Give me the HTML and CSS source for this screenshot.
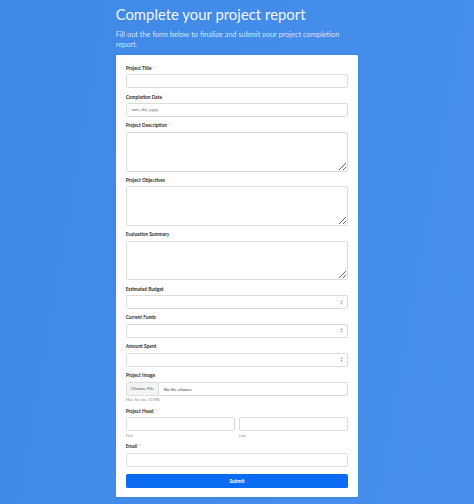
FILE: index.html
```html
<!DOCTYPE html>
<html lang="en">
<head>
<meta charset="utf-8">
<title>Complete your project report</title>
<link rel="stylesheet" href="styles.css">
</head>
<body>
<div class="page">
  <main class="wrap">
    <h1 class="title">Complete your project report</h1>
    <p class="subtitle">Fill out the form below to finalize and submit your project completion report.</p>
    <form class="card">
      <div class="field">
        <label class="label">Project Title <span class="req">*</span></label>
        <input class="input" type="text">
      </div>
      <div class="field">
        <label class="label">Completion Date <span class="req">*</span></label>
        <input class="input date" type="date">
      </div>
      <div class="field">
        <label class="label">Project Description <span class="req">*</span></label>
        <textarea class="input area"></textarea>
      </div>
      <div class="field">
        <label class="label">Project Objectives</label>
        <textarea class="input area"></textarea>
      </div>
      <div class="field">
        <label class="label">Evaluation Summary</label>
        <textarea class="input area"></textarea>
      </div>
      <div class="field">
        <label class="label">Estimated Budget</label>
        <div class="numwrap">
          <input class="input num" type="number">
          <svg class="spin" viewBox="0 0 8 14" width="8" height="14"><path d="M4 1 L7 5 H1 Z M4 13 L7 9 H1 Z" fill="#8a8a8a"/></svg>
        </div>
      </div>
      <div class="field">
        <label class="label">Current Funds</label>
        <div class="numwrap">
          <input class="input num" type="number">
          <svg class="spin" viewBox="0 0 8 14" width="8" height="14"><path d="M4 1 L7 5 H1 Z M4 13 L7 9 H1 Z" fill="#8a8a8a"/></svg>
        </div>
      </div>
      <div class="field">
        <label class="label">Amount Spent</label>
        <div class="numwrap">
          <input class="input num" type="number">
          <svg class="spin" viewBox="0 0 8 14" width="8" height="14"><path d="M4 1 L7 5 H1 Z M4 13 L7 9 H1 Z" fill="#8a8a8a"/></svg>
        </div>
      </div>
      <div class="field">
        <label class="label">Project Image</label>
        <input class="input file" type="file">
        <div class="help">Max. file size: 10 MB.</div>
      </div>
      <div class="field">
        <label class="label">Project Head <span class="req">*</span></label>
        <div class="pair">
          <div class="sub">
            <input class="input" type="text">
            <div class="help">First</div>
          </div>
          <div class="sub">
            <input class="input" type="text">
            <div class="help">Last</div>
          </div>
        </div>
      </div>
      <div class="field">
        <label class="label">Email <span class="req">*</span></label>
        <input class="input" type="email">
      </div>
      <button class="submit" type="button">Submit</button>
    </form>
  </main>
</div>
</body>
</html>
```
FILE: styles.css
```css
html, body {
  margin: 0;
  padding: 0;
}
body {
  background: linear-gradient(100deg, #3f88e6 0%, #438cea 45%, #478fea 100%);
  font-family: Lato, "Open Sans", sans-serif;
  min-height: 504px;
  overflow: hidden;
}
.page {
  zoom: 0.37;
  display: flex;
  justify-content: center;
}
.wrap {
  width: 656px;
  padding-top: 11px;
}
.title {
  margin: 0;
  font-size: 40px;
  font-weight: 400;
  line-height: 58px;
  color: #f2f7ff;
  letter-spacing: 0.1px;
}
.subtitle {
  margin: 13px 0 0;
  font-size: 20px;
  line-height: 27px;
  color: rgba(255, 255, 255, 0.78);
  padding-right: 30px;
}
.card {
  margin-top: 12px;
  background: #fff;
  border-radius: 3px;
  padding: 27px 27px 25px;
  display: flex;
  flex-direction: column;
  box-shadow: 0 2px 6px rgba(0, 0, 0, 0.08);
}
.field {
  display: flex;
  flex-direction: column;
  margin-bottom: 14px;
}
.label {
  font-size: 13px;
  font-weight: 700;
  line-height: 20px;
  color: #2b2b2b;
  margin-bottom: 6px;
}
.req {
  color: #e89a9a;
  font-weight: 400;
  margin-left: 2px;
}
.input {
  box-sizing: border-box;
  width: 100%;
  height: 38px;
  border: 2px solid #dcdcdc;
  border-radius: 5px;
  background: #fff;
  font-family: Lato, sans-serif;
  font-size: 13px;
  padding: 0 12px;
  margin: 0;
  color: #555;
}
.area {
  height: 107px;
  resize: vertical;
  padding: 8px 12px;
}
.date {
  color: #666;
  font-size: 12px;
}
.date::-webkit-calendar-picker-indicator {
  display: none;
}
.numwrap {
  position: relative;
}
.num {
  -moz-appearance: textfield;
}
.num::-webkit-inner-spin-button,
.num::-webkit-outer-spin-button {
  -webkit-appearance: none;
  margin: 0;
}
.spin {
  position: absolute;
  right: 14px;
  top: 12px;
}
.file {
  padding: 0;
  font-size: 12px;
  color: #444;
  display: flex;
  align-items: center;
}
.file::file-selector-button {
  height: 100%;
  border: none;
  border-right: 2px solid #dcdcdc;
  background: #f3f4f6;
  color: #555;
  font-family: Lato, sans-serif;
  font-size: 12px;
  padding: 0 12px;
  margin-right: 12px;
}
.help {
  margin-top: 4px;
  font-size: 10px;
  line-height: 14px;
  color: #8a8a8a;
}
.pair {
  display: grid;
  grid-template-columns: 1fr 1fr;
  gap: 11px;
}
.sub {
  display: flex;
  flex-direction: column;
}
.submit {
  margin-top: 5px;
  height: 38px;
  border: none;
  border-radius: 5px;
  background: #0a6cf2;
  color: #fff;
  font-family: Lato, sans-serif;
  font-size: 13px;
  font-weight: 700;
}
```
